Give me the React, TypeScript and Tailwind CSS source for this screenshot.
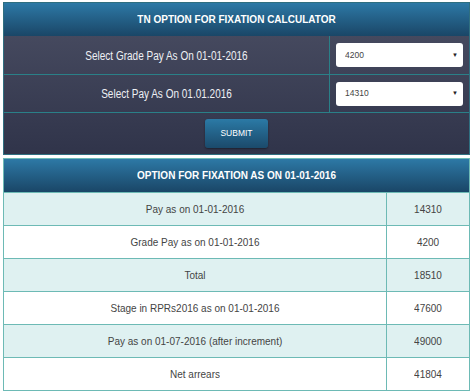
import React from "react";

const rows = [
  { label: "Pay as on 01-01-2016", value: "14310" },
  { label: "Grade Pay as on 01-01-2016", value: "4200" },
  { label: "Total", value: "18510" },
  { label: "Stage in RPRs2016 as on 01-01-2016", value: "47600" },
  { label: "Pay as on 01-07-2016 (after increment)", value: "49000" },
  { label: "Net arrears", value: "41804" },
];

function FakeSelect({ value }: { value: string }) {
  return (
    <div className="flex h-[24px] w-[127px] items-center justify-between rounded-[3px] bg-white pl-[9px] pr-[5px] text-[8.5px] text-[#444]">
      <span className="inline-block scale-y-110">{value}</span>
      <span className="text-[6px] text-[#222]">▼</span>
    </div>
  );
}

export default function App() {
  return (
    <div
      className="min-h-[392px] bg-white pt-[2px] pl-[3px]"
      style={{ fontFamily: '"Liberation Sans", Arial, sans-serif' }}
    >
      {/* calculator panel */}
      <div className="w-[467px] border border-[#2f6f80] bg-gradient-to-b from-[#4b4f64] to-[#30344a]">
        <div className="flex h-[33px] items-center justify-center bg-gradient-to-b from-[#2d79a6] to-[#1a4667] text-[10px] font-bold text-white">
          <span className="inline-block scale-y-110">TN OPTION FOR FIXATION CALCULATOR</span>
        </div>
        <div className="grid grid-cols-[326px_1fr] border-b border-[#2a8088]">
          <div className="flex h-[38px] items-center justify-center border-r border-[#2a8088] text-[10px] text-[#eef0f4]">
            <span className="inline-block scale-y-125">Select Grade Pay As On 01-01-2016</span>
          </div>
          <div className="flex h-[38px] items-center justify-center">
            <FakeSelect value="4200" />
          </div>
        </div>
        <div className="grid grid-cols-[326px_1fr] border-b border-[#2a8088]">
          <div className="flex h-[37px] items-center justify-center border-r border-[#2a8088] text-[10px] text-[#eef0f4]">
            <span className="inline-block scale-y-125">Select Pay As On 01.01.2016</span>
          </div>
          <div className="flex h-[37px] items-center justify-center">
            <FakeSelect value="14310" />
          </div>
        </div>
        <div className="flex h-[41px] items-center justify-center">
          <button className="h-[29px] w-[63px] rounded-[3px] bg-gradient-to-b from-[#2b7aa6] to-[#1b4a6b] text-[8.5px] text-white shadow-[0_1px_2px_rgba(0,0,0,0.4)]">
            <span className="inline-block scale-y-110">SUBMIT</span>
          </button>
        </div>
      </div>

      {/* result table */}
      <div className="mt-[3px] w-[467px] border border-[#6dbab5]">
        <div className="flex h-[33px] items-center justify-center bg-gradient-to-b from-[#2d79a6] to-[#1a4667] text-[10px] font-bold text-white">
          <span className="inline-block scale-y-110">OPTION FOR FIXATION AS ON 01-01-2016</span>
        </div>
        {rows.map((r, i) => (
          <div
            key={r.label}
            className={`grid grid-cols-[383px_1fr] border-t border-[#6dbab5] text-[10px] text-[#444] ${
              i % 2 === 0 ? "bg-[#dff1f1]" : "bg-white"
            }`}
          >
            <div className="flex h-[32px] items-center justify-center border-r border-[#6dbab5]">
              <span className="inline-block scale-y-110">{r.label}</span>
            </div>
            <div className="flex h-[32px] items-center justify-center">
              <span className="inline-block scale-y-110">{r.value}</span>
            </div>
          </div>
        ))}
      </div>
    </div>
  );
}
